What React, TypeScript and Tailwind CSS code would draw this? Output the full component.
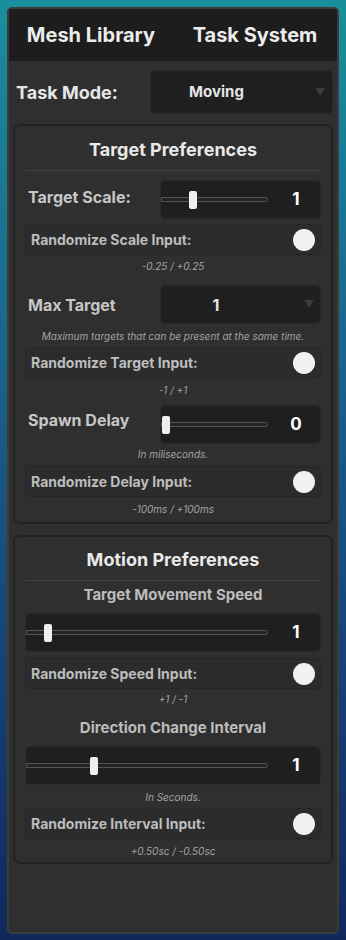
import React from 'react';

const font = { fontFamily: 'Inter, "Noto Sans", sans-serif' };

function SliderValue({ pos, value, full }: { pos: number; value: string; full?: boolean }) {
  return (
    <div
      className={
        'flex h-[39px] items-center rounded-[5px] border border-[#2a2a2a] bg-[#1f1f1f] ' +
        (full ? 'w-full' : 'w-[161px]')
      }
    >
      <div className="relative h-[5px] flex-1 rounded-r-[3px] border border-[#555555] bg-[#232323]">
        <div
          className="absolute top-1/2 h-[18px] w-[8px] -translate-y-1/2 rounded-[2px] bg-[#efefef]"
          style={{ left: pos }}
        />
      </div>
      <div className="w-[52px] pl-[4px] text-center text-[17px] font-bold text-white">{value}</div>
    </div>
  );
}

function Toggle({ label }: { label: string }) {
  return (
    <div className="flex h-[31px] items-center justify-between rounded-[4px] border border-[#272727] bg-[#2c2c2c] pl-[5px] pr-[5px]">
      <span className="text-[14px] font-bold text-[#bdbdbd]">{label}</span>
      <div className="h-[22px] w-[22px] rounded-full bg-[#f1f1f1]" />
    </div>
  );
}

function Caption({ children, mt }: { children: React.ReactNode; mt: string }) {
  return (
    <p className={'text-center text-[10px] leading-[12px] italic text-[#a3a3a3] ' + mt}>{children}</p>
  );
}

export default function App() {
  return (
    <div
      className="min-h-[940px] w-full bg-gradient-to-b from-[#1a8f9c] via-[#1a5683] to-[#11285b] p-[7px]"
      style={font}
    >
      <div className="flex h-[927px] w-[332px] flex-col overflow-hidden rounded-[5px] border-2 border-[#3c3c3c] bg-[#2f2f2f]">
        {/* Tabs */}
        <div className="grid h-[52px] shrink-0 grid-cols-2 items-center bg-[#1d1d1d]">
          <div className="text-center text-[20px] font-bold text-[#ececec]">Mesh Library</div>
          <div className="text-center text-[20px] font-bold text-[#ececec]">Task System</div>
        </div>

        <div className="flex flex-col px-[4px]">
          {/* Task mode */}
          <div className="mt-[9px] flex items-center justify-between pl-[3px]">
            <span className="text-[18px] font-bold text-[#e6e6e6]">Task Mode:</span>
            <div className="relative flex h-[44px] w-[183px] items-center justify-center rounded-[5px] border border-[#2a2a2a] bg-[#1f1f1f] pr-[50px]">
              <span className="text-[15px] font-bold text-[#e6e6e6]">Moving</span>
              <span className="absolute right-[7px] text-[10px] text-[#3e3e3e]">▼</span>
            </div>
          </div>

          {/* Target Preferences */}
          <div className="mt-[10px] rounded-[7px] border-2 border-[#222222] px-[10px] pb-[7px] pt-[12px]">
            <h2 className="text-center text-[18px] leading-[24px] font-bold text-[#e9e9e9]">Target Preferences</h2>
            <div className="mt-[8px] h-px bg-[#424242]" />

            <div className="mt-[9px] flex items-center justify-between">
              <span className="pb-[6px] pl-[3px] text-[16px] font-bold text-[#c6c6c6]">Target Scale:</span>
              <SliderValue pos={27} value="1" />
            </div>
            <div className="mt-[5px]">
              <Toggle label="Randomize Scale Input:" />
            </div>
            <Caption mt="mt-[5px]">-0.25 / +0.25</Caption>

            <div className="mt-[13px] flex items-center justify-between">
              <span className="pl-[3px] text-[16px] font-bold text-[#c6c6c6]">Max Target</span>
              <div className="relative flex h-[39px] w-[161px] items-center rounded-[5px] border border-[#2a2a2a] bg-[#1f1f1f]">
                <span className="w-[110px] text-center text-[16px] font-bold text-[#e6e6e6]">1</span>
                <span className="absolute right-[6px] text-[10px] text-[#3e3e3e]">▼</span>
              </div>
            </div>
            <Caption mt="mt-[6px]">Maximum targets that can be present at the same time.</Caption>
            <div className="mt-[5px]">
              <Toggle label="Randomize Target Input:" />
            </div>
            <Caption mt="mt-[6px]">-1 / +1</Caption>

            <div className="mt-[9px] flex items-start justify-between">
              <span className="pl-[3px] pt-[3px] text-[16px] font-bold text-[#c6c6c6]">Spawn Delay</span>
              <SliderValue pos={0} value="0" />
            </div>
            <Caption mt="mt-[4px]">In miliseconds.</Caption>
            <div className="mt-[6px]">
              <Toggle label="Randomize Delay Input:" />
            </div>
            <Caption mt="mt-[6px]">-100ms / +100ms</Caption>
          </div>

          {/* Motion Preferences */}
          <div className="mt-[11px] rounded-[7px] border-2 border-[#222222] px-[10px] pb-[5px] pt-[11px]">
            <h2 className="text-center text-[18px] leading-[24px] font-bold text-[#e9e9e9]">Motion Preferences</h2>
            <div className="mt-[8px] h-px bg-[#424242]" />

            <h3 className="mt-[4px] text-center text-[15px] leading-[20px] font-bold text-[#bcbcbc]">
              Target Movement Speed
            </h3>
            <div className="mt-[8px]">
              <SliderValue pos={17} value="1" full />
            </div>
            <div className="mt-[6px]">
              <Toggle label="Randomize Speed Input:" />
            </div>
            <Caption mt="mt-[4px]">+1 / -1</Caption>

            <h3 className="mt-[13px] text-center text-[15px] leading-[20px] font-bold text-[#bcbcbc]">
              Direction Change Interval
            </h3>
            <div className="mt-[8px]">
              <SliderValue pos={63} value="1" full />
            </div>
            <Caption mt="mt-[6px]">In Seconds.</Caption>
            <div className="mt-[5px]">
              <Toggle label="Randomize Interval Input:" />
            </div>
            <Caption mt="mt-[6px]">+0.50sc / -0.50sc</Caption>
          </div>
        </div>
      </div>
    </div>
  );
}
